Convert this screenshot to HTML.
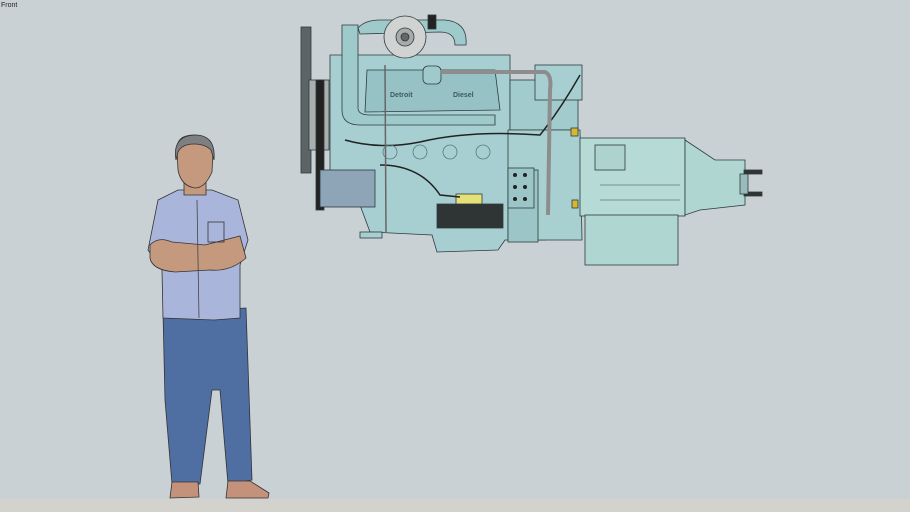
<!DOCTYPE html>
<html><head><meta charset="utf-8"><style>
html,body{margin:0;padding:0;width:910px;height:512px;overflow:hidden;background:#c9d1d5;}
svg{display:block}
</style></head><body>
<svg width="910" height="512" viewBox="0 0 910 512" xmlns="http://www.w3.org/2000/svg" font-family="Liberation Sans, sans-serif">
<rect width="910" height="512" fill="#c9d1d5"/>
<rect y="499" width="910" height="13" fill="#d3d2cc"/>
<text x="1" y="7" font-size="7" fill="#222">Front</text>

<!-- person -->
<g stroke="#333" stroke-width="0.8">
<path d="M163 312 L246 308 L252 480 L228 484 L220 390 L212 390 L200 484 L172 484 L165 400 Z" fill="#4f6ea2"/>
<path d="M172 482 L198 482 L199 497 L170 498 Z" fill="#c4927b"/>
<path d="M228 481 L250 481 L269 493 L268 498 L226 498 Z" fill="#c4927b"/>
<path d="M158 200 L178 190 L212 190 L238 200 L248 240 L240 265 L240 318 L214 320 L163 318 L162 270 L148 250 Z" fill="#aab5dc"/>
<path d="M184 180 L206 180 L206 195 L184 195 Z" fill="#c4997e"/>
<path d="M177 150 Q176 135 194 135 Q214 136 213 152 L212 172 Q205 188 195 188 Q181 186 178 170 Z" fill="#c4997e"/>
<path d="M176 160 Q172 136 195 135 Q216 135 214 160 L211 150 Q205 144 194 144 Q182 144 178 152 Z" fill="#7d7f80"/>
<path d="M150 245 Q158 236 172 242 L205 245 L240 236 L246 258 Q230 272 210 270 L175 272 Q152 270 150 258 Z" fill="#c4997e"/>
<rect x="208" y="222" width="16" height="20" fill="none"/>
</g>
<line x1="197" y1="200" x2="199" y2="318" stroke="#444" stroke-width="0.8"/>

<!-- engine -->
<g stroke="#2c3b3d" stroke-width="0.8">
<rect x="301" y="27" width="10" height="146" fill="#5d6466"/>
<rect x="309" y="80" width="20" height="70" fill="#aab0b0"/>
<rect x="316" y="80" width="8" height="130" fill="#222"/>
<path d="M330 55 L510 55 L510 130 L545 130 L545 240 L505 240 L498 250 L437 252 L432 235 L370 232 L360 205 L330 205 Z" fill="#a7cfd1"/>
<path d="M367 70 L495 70 L500 110 L365 112 Z" fill="#96c2c5"/>
<text x="390" y="97" font-size="7" font-weight="bold" fill="#3e5a5c" stroke="none">Detroit</text>
<text x="453" y="97" font-size="7" font-weight="bold" fill="#3e5a5c" stroke="none">Diesel</text>
<rect x="423" y="66" width="18" height="18" rx="5" fill="#a0c9cb"/>
<rect x="510" y="80" width="68" height="50" fill="#a2cbcd"/>
<rect x="535" y="65" width="47" height="35" fill="#a7cfd1"/>
<path d="M508 130 L580 130 L582 240 L508 240 Z" fill="#a9d0d0"/>
<rect x="508" y="170" width="30" height="72" fill="#9cc5c7"/>
<rect x="580" y="138" width="105" height="78" fill="#b6dbd6"/>
<rect x="585" y="215" width="93" height="50" fill="#b0d6d2"/>
<rect x="595" y="145" width="30" height="25" fill="#aed3cf"/>
<path d="M685 140 L715 160 L745 160 L745 205 L700 210 L685 215 Z" fill="#b0d6d2"/>
<rect x="744" y="170" width="18" height="4" fill="#333"/>
<rect x="744" y="192" width="18" height="4" fill="#333"/>
<rect x="740" y="174" width="8" height="20" fill="#9bb"/>
<path d="M342 25 L358 25 L358 108 Q358 115 370 115 L495 115 L495 125 L360 125 Q342 125 342 110 Z" fill="#9fcacc"/>
<path d="M358 28 Q365 20 380 20 L445 20 Q468 22 466 45 L455 45 Q455 32 440 32 L360 34 Z" fill="#9fcacc"/>
<circle cx="405" cy="37" r="21" fill="#d1d3d3"/>
<circle cx="405" cy="37" r="9" fill="#aaa"/>
<circle cx="405" cy="37" r="4" fill="#666"/>
<rect x="428" y="15" width="8" height="14" fill="#222"/>
<rect x="320" y="170" width="55" height="37" fill="#8ea5b8"/>
<rect x="437" y="204" width="66" height="24" fill="#2f3434"/>
<rect x="456" y="194" width="26" height="10" fill="#e6e07a"/>
<rect x="508" y="168" width="26" height="40" fill="#9cc5c7"/>
<rect x="360" y="232" width="22" height="6" fill="#a7cfd1"/>
<rect x="572" y="200" width="6" height="8" fill="#d7b832"/>
<rect x="571" y="128" width="7" height="8" fill="#d7b832"/>
</g>
<g fill="none" stroke="#222" stroke-width="1.5">
<path d="M345 140 Q380 150 420 142 Q470 130 540 135 Q560 110 580 75"/>
<path d="M380 165 Q420 165 440 195 L460 197"/>
</g>
<path d="M440 72 L545 72 Q552 75 550 90 L548 215" fill="none" stroke="#8d8d8d" stroke-width="4"/>
<line x1="385" y1="65" x2="386" y2="232" stroke="#666" stroke-width="1.5"/>
<g fill="#222">
<circle cx="515" cy="175" r="2"/><circle cx="525" cy="175" r="2"/><circle cx="515" cy="187" r="2"/><circle cx="525" cy="187" r="2"/><circle cx="515" cy="199" r="2"/><circle cx="525" cy="199" r="2"/>
</g>
<g fill="none" stroke="#5a7a7c" stroke-width="0.8">
<circle cx="390" cy="152" r="7"/><circle cx="420" cy="152" r="7"/><circle cx="450" cy="152" r="7"/><circle cx="483" cy="152" r="7"/>
<line x1="600" y1="185" x2="680" y2="185"/><line x1="600" y1="200" x2="680" y2="200"/>
</g>
</svg>
</body></html>
